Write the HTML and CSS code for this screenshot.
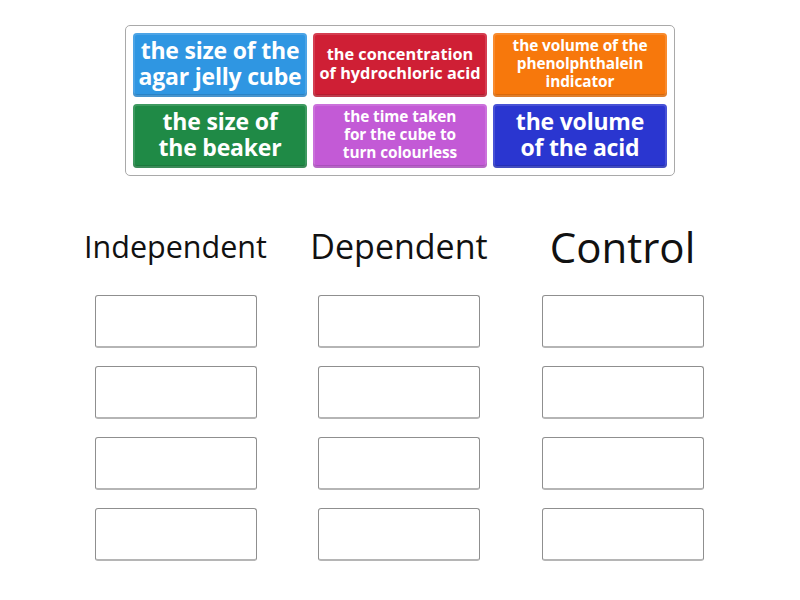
FILE: index.html
```html
<!DOCTYPE html>
<html>
<head>
<meta charset="utf-8">
<link rel="stylesheet" href="styles.css">
</head>
<body>
<div class="page">
  <div class="bank">
    <div class="tile blue big"><span>the size of the<br>agar jelly cube</span></div>
    <div class="tile red mid"><span>the concentration<br>of hydrochloric acid</span></div>
    <div class="tile orange small"><span>the volume of the<br>phenolphthalein<br>indicator</span></div>
    <div class="tile green big"><span>the size of<br>the beaker</span></div>
    <div class="tile purple small"><span>the time taken<br>for the cube to<br>turn colourless</span></div>
    <div class="tile navy big"><span>the volume<br>of the acid</span></div>
  </div>
  <div class="groups">
    <div class="group">
      <div class="head h1">Independent</div>
      <div class="slot"></div><div class="slot"></div><div class="slot"></div><div class="slot"></div>
    </div>
    <div class="group">
      <div class="head h2">Dependent</div>
      <div class="slot"></div><div class="slot"></div><div class="slot"></div><div class="slot"></div>
    </div>
    <div class="group">
      <div class="head h3">Control</div>
      <div class="slot"></div><div class="slot"></div><div class="slot"></div><div class="slot"></div>
    </div>
  </div>
</div>
</body>
</html>
```

FILE: styles.css
```css
html, body {
  margin: 0;
  padding: 0;
  background: #ffffff;
}
body {
  font-family: "Open Sans", "Liberation Sans", sans-serif;
  width: 800px;
  height: 600px;
  overflow: hidden;
}
.page {
  display: flex;
  flex-direction: column;
  align-items: center;
  padding-top: 25px;
}
.bank {
  width: 534px;
  padding: 7px;
  border: 1px solid #a9a9a9;
  border-radius: 5px;
  display: grid;
  grid-template-columns: 174px 174px 174px;
  grid-auto-rows: 64px;
  column-gap: 6px;
  row-gap: 7px;
}
.tile {
  border-radius: 4px;
  display: flex;
  align-items: center;
  justify-content: center;
  text-align: center;
  color: #ffffff;
  font-weight: 700;
  white-space: nowrap;
  box-shadow: inset 0 0 0 2px rgba(255,255,255,0.14), inset 0 -3px 0 rgba(0,0,0,0.12);
}
.tile span { display: block; }
.big { font-size: 23px; line-height: 26px; letter-spacing: -0.2px; }
.big span { margin-top: -5px; }
.mid { font-size: 16.3px; line-height: 19px; }
.mid span { margin-top: -2px; }
.small { font-size: 15.4px; line-height: 18px; letter-spacing: -0.1px; }
.small span { margin-top: -2px; }
.blue { background: #2f96e2; }
.red { background: #cf1f35; }
.orange { background: #f7780c; }
.green { background: #1f8a46; }
.purple { background: #c35ad6; }
.navy { background: #2a36d0; }

.groups {
  display: grid;
  grid-template-columns: 223px 224px 223px;
  margin-top: 23px;
  margin-left: -2px;
}
.group {
  display: flex;
  flex-direction: column;
  align-items: center;
}
.head {
  height: 94px;
  display: flex;
  align-items: center;
  justify-content: center;
  color: #111111;
  font-weight: 400;
  white-space: nowrap;
  margin-bottom: 2px;
}
.h1 { font-size: 30.5px; }
.h2 { font-size: 34px; }
.h3 { font-size: 42px; }
.slot {
  width: 160px;
  height: 50px;
  border: 1px solid #8f8f8f;
  border-bottom: 2px solid #b5b5b5;
  border-radius: 3px;
  margin-bottom: 18px;
  background: #ffffff;
}
```
